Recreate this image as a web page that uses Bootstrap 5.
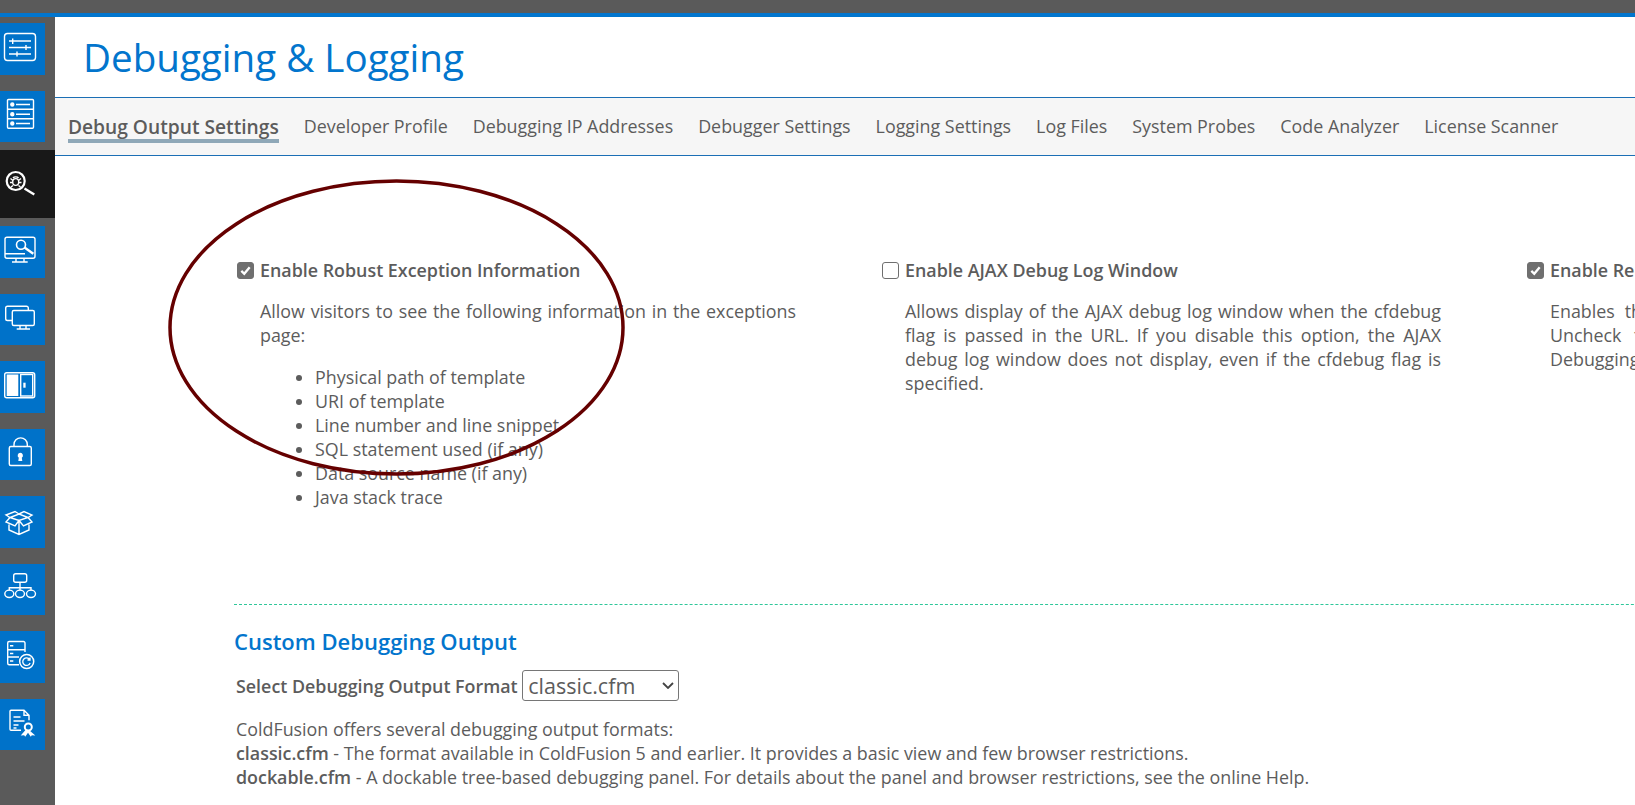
<!doctype html>
<html lang="en"><head><meta charset="utf-8"><title>Debugging &amp; Logging</title>
<link href="https://cdn.jsdelivr.net/npm/bootstrap@5.3.0/dist/css/bootstrap.min.css" rel="stylesheet">
<style>
html,body{height:100%;overflow:hidden}
body{background:#5a5a5a;font-family:"Open Sans",sans-serif;font-size:17.87px;line-height:24px;color:#5c5c5c;width:1635px}
.topstrip{height:13px;background:#5a5a5a}
.shell{height:792px;border-top:4px solid #0275cd}
.sidebar{width:55px;flex:none;padding-top:6px;background:#5a5a5a}
.sideitem{width:45px;height:51.5px;background:#0072c9;margin-bottom:16px;display:flex;align-items:center;justify-content:flex-start}
.sideitem.act{width:55px;height:68px;background:#181818;margin-top:-8px;margin-bottom:8px;position:relative}
.sideitem.act::after{content:"";position:absolute;left:55px;top:25px;border-left:9px solid #111;border-top:9px solid transparent;border-bottom:9px solid transparent}
.sideitem svg{fill:none;stroke:#fff;stroke-width:1.4;width:40px;height:40px;flex:none}
.mainpane{flex:1;background:#fff;min-width:0;overflow:hidden;position:relative}
.pagetitle{height:80px;margin:0;padding:18px 0 0 28px;font-size:38.6px;line-height:44px;font-weight:400;color:#0275cd}
.tabbar{height:59px;background:#f6f6f6;border-top:1px solid #1b6fb5;border-bottom:1px solid #1b6fb5;gap:25px;padding:0 0 0 13px}
.tablink{color:#5c5c5c;text-decoration:none;line-height:24px;display:block;margin-bottom:2px}
.tablink.on{font-weight:600;font-size:19.2px;border-bottom:4px solid #8fa8b8;line-height:24px;margin:4px 0 0}
.optrow{display:flex;padding:95px 0 0 182px;width:1600px;gap:25px;height:448px}
.optcol{width:620px;flex:none}
.opthead{font-weight:600;display:flex;align-items:center;line-height:24px;margin-top:7px}
.optcheck{appearance:none;width:17px;height:17px;margin:0 6px 0 0;border:1.5px solid #6f6f6f;border-radius:3px;background:#fff;flex:none;position:relative}
.optcheck:checked{background:#6f6f6f url("data:image/svg+xml,%3Csvg xmlns='http://www.w3.org/2000/svg' viewBox='0 0 18 18'%3E%3Cpath d='M4 9.5l3.500 3.500L14 5' fill='none' stroke='%23fff' stroke-width='2.800'/%3E%3C/svg%3E") center/100% no-repeat}
.optbody{margin:17px 0 0 23px;width:536px;text-align:justify}
.optlist{margin:18px 0 0;padding-left:55px;line-height:24px}
.customsec{width:1500px;margin-left:179px;border-top:1px dashed #2fc79a;padding-top:22px}
.customhead{font-size:22px;font-weight:600;color:#0275cd;line-height:28px;margin:0 0 15px}
.fmtlabel{font-weight:600;margin-left:2px}
.fmtselect{appearance:none;width:157px;height:31px;font-size:21.5px;line-height:29px;font-family:inherit;color:#5c5c5c;border:1px solid #767676;border-radius:3px;background:#fff url("data:image/svg+xml,%3Csvg xmlns='http://www.w3.org/2000/svg' viewBox='0 0 12 7'%3E%3Cpath d='M1 1l5 5 5-5' fill='none' stroke='%23444' stroke-width='1.800'/%3E%3C/svg%3E") right 4px center/12px 7px no-repeat;margin-left:0;padding:0 0 0 5px}
.fmtdesc{margin:16px 0 0 2px}
.annot{position:absolute;left:0;top:0;pointer-events:none}
</style></head>
<body>
<div class="topstrip"></div>
<div class="shell d-flex">
<nav class="sidebar">
<div class="sideitem"><svg viewBox="0 0 40 40"><rect x="4.500" y="4.500" width="31" height="27" rx="3"/><path d="M9 12h22M9 18.500h22M9 25h22M12.700 9.500v5.500M26 16v5M17 22.500v5"/></svg></div>
<div class="sideitem"><svg viewBox="0 0 40 40"><rect x="7.500" y="3.500" width="26" height="28.700" rx="1"/><path d="M7.500 13.200h26M7.500 22.800h26M16 8.500h14M16 18.200h14M16 27.500h14"/><circle cx="12.300" cy="8.500" r="1.500" fill="#fff"/><circle cx="12.300" cy="18.200" r="1.500" fill="#fff"/><circle cx="12.300" cy="27.500" r="1.500" fill="#fff"/></svg></div>
<div class="sideitem act"><svg viewBox="0 0 40 40"><circle cx="15.700" cy="17" r="9" stroke-width="2.200"/><path d="M24.500 24.500l9.800 6" stroke-width="2.400"/><ellipse cx="15.700" cy="18" rx="3" ry="3.400"/><path d="M13 14c1-1.500 4.500-1.500 5.500 0M10.500 14.500l2.500 2M21 14.500l-2.500 2M10 18.500h2.700M21.500 18.500h-2.700M11 23l2-1.500M20.500 23l-2-1.500"/></svg></div>
<div class="sideitem"><svg viewBox="0 0 40 40"><rect x="5" y="5.200" width="30" height="21" rx="2"/><path d="M5 21.800h20M16 26.200v3.800M24 26.200v3.800M12 30h15.700"/><circle cx="21" cy="12.800" r="4.500" stroke-width="1.600"/><path d="M24.500 15.500l8.800 6.300" stroke-width="2.400"/></svg></div>
<div class="sideitem"><svg viewBox="0 0 40 40"><path d="M12.300 21.500H7.500a1.800 1.800 0 0 1-1.800-1.800V9a1.800 1.800 0 0 1 1.800-1.800h19a1.800 1.800 0 0 1 1.800 1.800v2.500"/><rect x="12.300" y="11.500" width="22" height="15" rx="1.500"/><path d="M20 26.500V30M26 26.500V30M16.700 30H30"/></svg></div>
<div class="sideitem"><svg viewBox="0 0 40 40"><rect x="4.700" y="5.700" width="30" height="25" rx="2"/><rect x="6.700" y="7.500" width="11.600" height="21.500" fill="#fff" stroke="none"/><rect x="20.700" y="7.500" width="12" height="21.500"/><rect x="23.300" y="15.700" width="2.300" height="5" fill="#fff" stroke="none"/></svg></div>
<div class="sideitem"><svg viewBox="0 0 40 40"><path d="M14 12.500V10.500a6.650 6.650 0 0 1 13.300 0v2"/><rect x="9.300" y="12.500" width="22" height="19" rx="1.500"/><path d="M20.300 18.800a2.700 2.700 0 0 1 1.500 4.900l.5 3.300h-4l.5-3.300a2.700 2.700 0 0 1 1.500-4.900z" fill="#fff" stroke="none"/></svg></div>
<div class="sideitem"><svg viewBox="0 0 40 40"><path d="M19 12l-4-2.500L6 13l4 2.500M19 12l5-2.500L32 13l-4 2.500M10 15.500L6 20l9 4 4-5.500 4.500 5.500 8.500-4-4-4.500M10 15.500l9 3 9-3-9-3.500zM9 22.500V28l10 4.500L29 28v-5.500M19 18.500v14"/></svg></div>
<div class="sideitem"><svg viewBox="0 0 40 40"><rect x="13.700" y="4.800" width="13" height="8.400" rx="2"/><path d="M20 13.200v8.300M9.300 21.500v-2.700h21.700v2.700"/><ellipse cx="9.300" cy="24.800" rx="4.500" ry="3.700"/><ellipse cx="20" cy="24.800" rx="4.500" ry="3.700"/><ellipse cx="31" cy="24.800" rx="4.500" ry="3.700"/></svg></div>
<div class="sideitem"><svg viewBox="0 0 40 40"><path d="M25 15V6a1.500 1.500 0 0 0-1.500-1.500H9.200A1.500 1.500 0 0 0 7.700 6v20.300a1.500 1.500 0 0 0 1.500 1.500H19M7.700 12.800H25M7.700 20H19"/><path d="M10 8.700h3.300M10 16.400h3.300M10 24h3.300" stroke-width="1.500"/><circle cx="26.700" cy="24.500" r="7" stroke-width="1.500"/><path d="M29.700 22.500a3.800 3.800 0 1 0 .4 3.500M30 20.500v2.500h-2.500" stroke-width="1.300"/></svg></div>
<div class="sideitem"><svg viewBox="0 0 40 40"><path d="M21 26.300H11a1 1 0 0 1-1-1V7.300a1 1 0 0 1 1-1h13l5 5v5M24 6.300v5h5"/><path d="M13.500 13h7M13.500 17h11M13.500 21h5M13.500 24h3"/><circle cx="28.300" cy="23" r="3.500" stroke-width="2"/><path d="M25.500 26l-4.800 5.500 3.500-.3 1 1.500 2.800-4 2.800 4 1-1.500 3.500.3L29 26z" fill="#fff" stroke="none"/></svg></div>
</nav>
<main class="mainpane">
<h1 class="pagetitle">Debugging &amp; Logging</h1>
<div class="tabbar d-flex align-items-center">
<a class="tablink on" href="#">Debug Output Settings</a>
<a class="tablink" href="#">Developer Profile</a>
<a class="tablink" href="#">Debugging IP Addresses</a>
<a class="tablink" href="#">Debugger Settings</a>
<a class="tablink" href="#">Logging Settings</a>
<a class="tablink" href="#">Log Files</a>
<a class="tablink" href="#">System Probes</a>
<a class="tablink" href="#">Code Analyzer</a>
<a class="tablink" href="#">License Scanner</a>
</div>
<div class="optrow">
<section class="optcol">
<label class="opthead"><input class="optcheck" type="checkbox" checked>Enable Robust Exception Information</label>
<div class="optbody">Allow visitors to see the following information in the exceptions page:
<ul class="optlist"><li>Physical path of template</li><li>URI of template</li><li>Line number and line snippet</li><li>SQL statement used (if any)</li><li>Data source name (if any)</li><li>Java stack trace</li></ul></div>
</section>
<section class="optcol">
<label class="opthead"><input class="optcheck" type="checkbox">Enable AJAX Debug Log Window</label>
<div class="optbody">Allows display of the AJAX debug log window when the cfdebug flag is passed in the URL. If you disable this option, the AJAX debug log window does not display, even if the cfdebug flag is specified.</div>
</section>
<section class="optcol">
<label class="opthead"><input class="optcheck" type="checkbox" checked>Enable Request Debugging Output</label>
<div class="optbody">Enables the debugging information after each page request. Uncheck this option to discontinue debugging information. Debugging output then appears for no page requests at all.</div>
</section>
</div>
<section class="customsec">
<h2 class="customhead">Custom Debugging Output</h2>
<div class="d-flex align-items-center"><label class="fmtlabel" for="fmt">Select Debugging Output Format</label>&nbsp;<select id="fmt" class="fmtselect"><option>classic.cfm</option><option>dockable.cfm</option></select></div>
<p class="fmtdesc">ColdFusion offers several debugging output formats:<br><strong class="fw-semibold">classic.cfm</strong> - The format available in ColdFusion 5 and earlier. It provides a basic view and few browser restrictions.<br><strong class="fw-semibold">dockable.cfm</strong> - A dockable tree-based debugging panel. For details about the panel and browser restrictions, see the online Help.</p>
</section>
<svg class="annot" width="600" height="500" viewBox="0 0 600 500"><ellipse cx="341.500" cy="310.500" rx="226.500" ry="146.500" fill="none" stroke="#650000" stroke-width="3.500"/></svg>
</main>
</div>
</body></html>
